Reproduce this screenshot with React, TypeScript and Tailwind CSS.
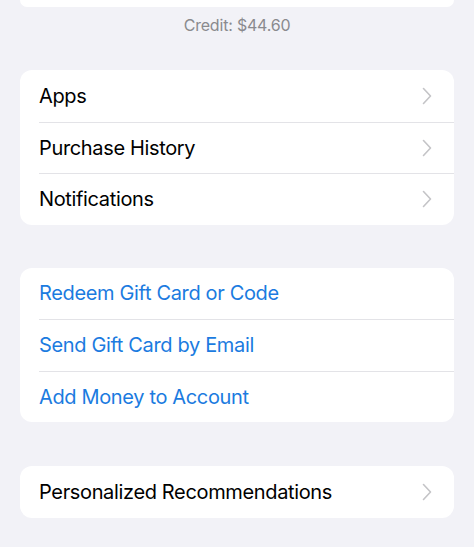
import React from 'react';

type Row = { label: string; chevron?: boolean };

const accountRows: Row[] = [
  { label: 'Apps', chevron: true },
  { label: 'Purchase History', chevron: true },
  { label: 'Notifications', chevron: true },
];

const giftRows: Row[] = [
  { label: 'Redeem Gift Card or Code' },
  { label: 'Send Gift Card by Email' },
  { label: 'Add Money to Account' },
];

function Chevron() {
  return (
    <svg width="10" height="18" viewBox="0 0 10 18" fill="none" className="shrink-0">
      <path d="M1.5 1.5L8.5 9L1.5 16.5" stroke="#c4c4c7" strokeWidth="1.6" strokeLinecap="round" strokeLinejoin="round" />
    </svg>
  );
}

function Group({ rows, blue }: { rows: Row[]; blue?: boolean }) {
  return (
    <div className="mx-5 bg-white rounded-[12px] overflow-hidden">
      {rows.map((r, i) => (
        <div key={r.label} className="pl-[19px]">
          <div
            className={`h-[51.5px] flex items-center justify-between pr-[22px] ${
              i > 0 ? 'border-t border-[#e3e3e7]' : ''
            }`}
          >
            <span className={`text-[20px] tracking-[-0.35px] ${blue ? 'text-[#1b7be0]' : 'text-black'}`}>
              {r.label}
            </span>
            {r.chevron && <Chevron />}
          </div>
        </div>
      ))}
    </div>
  );
}

export default function App() {
  return (
    <div className="w-[474px] h-[547px] bg-[#f2f2f7] overflow-hidden" style={{ fontFamily: 'Inter, "Noto Sans", sans-serif' }}>
      {/* bottom edge of the balance card above */}
      <div className="mx-5 h-[7px] bg-white rounded-b-[12px]" />

      <div className="h-[63px] flex justify-center pt-[7px]">
        <span className="text-[16px] tracking-[-0.2px] text-[#8a8a8e] leading-[22px]">Credit: $44.60</span>
      </div>

      <Group rows={accountRows} />
      <div className="h-[43px]" />
      <Group rows={giftRows} blue />
      <div className="h-[44px]" />
      <Group rows={[{ label: 'Personalized Recommendations', chevron: true }]} />
    </div>
  );
}
